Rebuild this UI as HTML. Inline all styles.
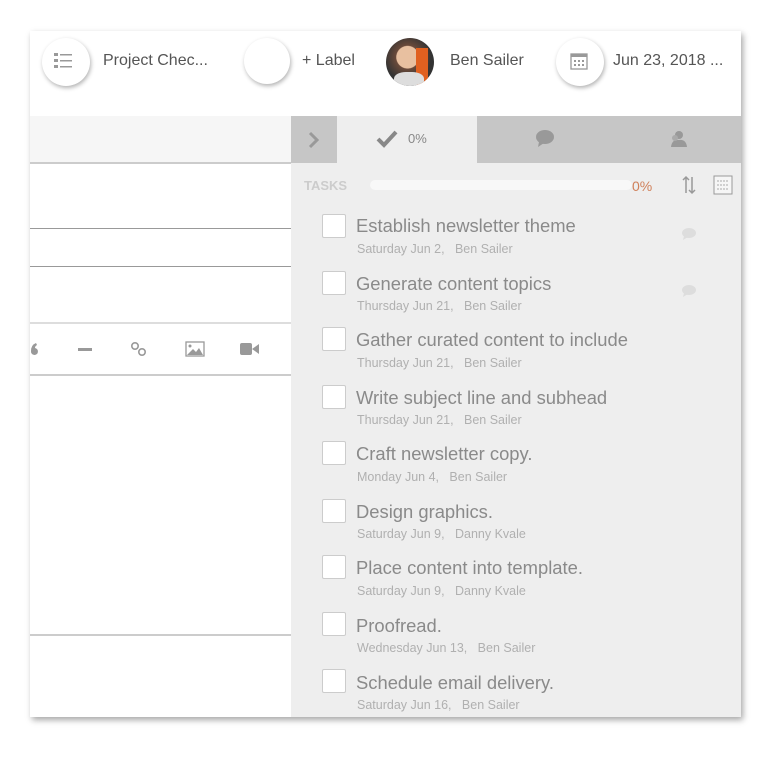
<!DOCTYPE html><html><head><style>
body{margin:0;width:770px;height:757px;background:#fff;font-family:"Liberation Sans",sans-serif;position:relative;overflow:hidden}
.a{position:absolute}
.win{left:30px;top:31px;width:711px;height:686px;background:#fff;box-shadow:2px 3px 6px rgba(0,0,0,.35)}
.circ{width:48px;height:48px;border-radius:50%;background:#fff;box-shadow:1px 2px 4px rgba(0,0,0,.3);}
.ht{font-size:16px;color:#555;top:52px}
.hl{left:0;width:261px;height:2px;background:#ccc}
.cb{left:322px;width:22px;height:22px;background:#fff;border:1px solid #ccc;border-radius:2px}
.t{left:356px;font-size:18.4px;color:#8a8a8a}
.s{left:357px;font-size:12.5px;color:#b0b0b0}
</style></head><body>
<div class="a win"></div>
<div class="a circ" style="left:42px;top:38px"></div>
<svg class="a" style="left:54px;top:52px" width="20" height="18"><g fill="#999"><rect x="0" y="1" width="4" height="3"/><rect x="6" y="2" width="12" height="1.5"/><rect x="0" y="7" width="4" height="3"/><rect x="6" y="8" width="12" height="1.5"/><rect x="0" y="13" width="4" height="3"/><rect x="6" y="14" width="12" height="1.5"/></g></svg>
<div class="a ht" style="left:103px">Project Chec...</div>
<div class="a circ" style="left:244px;top:38px;width:46px;height:46px"></div>
<div class="a ht" style="left:302px">+ Label</div>
<div class="a" style="left:386px;top:38px;width:48px;height:48px;border-radius:50%;background:radial-gradient(circle at 45% 40%,#e8c0a0 0 28%,#6a4a3a 30%,#333 60%);overflow:hidden"><div class="a" style="left:30px;top:10px;width:12px;height:38px;background:#e06020"></div><div class="a" style="left:8px;top:34px;width:30px;height:16px;background:#ddd;border-radius:40% 40% 0 0"></div></div>
<div class="a ht" style="left:450px">Ben Sailer</div>
<div class="a circ" style="left:556px;top:38px"></div>
<svg class="a" style="left:570px;top:52px" width="18" height="18"><rect x="1" y="2" width="16" height="15" fill="none" stroke="#999" stroke-width="1.3"/><rect x="1" y="2" width="16" height="3" fill="#999"/><g fill="#999"><rect x="4" y="8" width="2" height="2"/><rect x="8" y="8" width="2" height="2"/><rect x="12" y="8" width="2" height="2"/><rect x="4" y="12" width="2" height="2"/><rect x="8" y="12" width="2" height="2"/><rect x="12" y="12" width="2" height="2"/></g></svg>
<div class="a ht" style="left:613px">Jun 23, 2018 ...</div>
<div class="a" style="left:30px;top:116px;width:261px;height:47px;background:#f6f6f6"></div>
<div class="a hl" style="left:30px;top:162px"></div>
<div class="a hl" style="left:30px;top:228px;height:1px;background:#999"></div>
<div class="a hl" style="left:30px;top:266px;height:1px;background:#999"></div>
<div class="a hl" style="left:30px;top:322px;background:#ddd"></div>
<div class="a hl" style="left:30px;top:374px"></div>
<div class="a hl" style="left:30px;top:634px"></div>
<svg class="a" style="left:30px;top:342px" width="10" height="14"><path d="M6 1 Q1 3 1 9 A3.5 3.5 0 1 0 5 6 Q5 4 7 3Z" fill="#999"/></svg>
<div class="a" style="left:78px;top:348px;width:14px;height:3px;background:#999"></div>
<svg class="a" style="left:130px;top:341px" width="18" height="16"><circle cx="5" cy="5" r="3.2" fill="none" stroke="#999" stroke-width="1.6"/><circle cx="12" cy="11" r="3.2" fill="none" stroke="#999" stroke-width="1.6"/></svg>
<svg class="a" style="left:185px;top:341px" width="20" height="16"><rect x="1" y="1" width="18" height="14" fill="none" stroke="#999" stroke-width="1.3"/><circle cx="5" cy="5" r="1.5" fill="#999"/><path d="M2 14 L8 8 L11 11 L14 7 L18 14Z" fill="#999"/></svg>
<svg class="a" style="left:240px;top:342px" width="20" height="14"><rect x="0" y="1" width="12" height="12" rx="2" fill="#999"/><path d="M12 7 L19 2 L19 12Z" fill="#999"/></svg>
<div class="a" style="left:291px;top:116px;width:450px;height:601px;background:#eee"></div>
<div class="a" style="left:291px;top:116px;width:450px;height:47px;background:#c6c6c6"></div>
<div class="a" style="left:337px;top:116px;width:140px;height:47px;background:#eee"></div>
<svg class="a" style="left:308px;top:131px" width="12" height="18"><path d="M2 2 L9 9 L2 16" fill="none" stroke="#999" stroke-width="3"/></svg>
<svg class="a" style="left:376px;top:130px" width="22" height="18"><path d="M2 9 L8 15 L20 2" fill="none" stroke="#888" stroke-width="4"/></svg>
<div class="a" style="left:408px;top:131px;font-size:13px;color:#888">0%</div>
<svg class="a" style="left:535px;top:130px" width="20" height="18"><ellipse cx="10" cy="7" rx="9" ry="7" fill="#999"/><path d="M4 12 L3 17 L9 13Z" fill="#999"/></svg>
<svg class="a" style="left:668px;top:129px" width="22" height="20"><circle cx="11" cy="6" r="4" fill="#999"/><path d="M3 18 Q4 10 11 11 Q18 10 19 18Z" fill="#999"/><circle cx="7" cy="9" r="3" fill="#aaa"/></svg>
<div class="a" style="left:304px;top:178px;font-size:13px;font-weight:bold;color:#ccc">TASKS</div>
<div class="a" style="left:370px;top:180px;width:262px;height:10px;border-radius:5px;background:#f8f8f8"></div>
<div class="a" style="left:632px;top:178px;font-size:14px;color:#d0805a">0%</div>
<svg class="a" style="left:681px;top:175px" width="16" height="20"><path d="M5 2 V18 M2 5 L5 2 L8 5 M11 2 V18 M8 15 L11 18 L14 15" fill="none" stroke="#999" stroke-width="1.5"/></svg>
<svg class="a" style="left:713px;top:175px" width="20" height="20"><rect x="1" y="1" width="18" height="18" fill="#f6f6f6" stroke="#999"/><path d="M4 6 H16 M4 10 H16 M4 14 H16" stroke="#aaa" stroke-dasharray="2 1"/></svg>
<svg class="a" style="left:681px;top:227px" width="16" height="14"><ellipse cx="8" cy="6" rx="7" ry="5" fill="#ddd"/><path d="M3 9 L2 13 L7 10Z" fill="#ddd"/></svg>
<svg class="a" style="left:681px;top:284px" width="16" height="14"><ellipse cx="8" cy="6" rx="7" ry="5" fill="#ddd"/><path d="M3 9 L2 13 L7 10Z" fill="#ddd"/></svg>

<div class="a cb" style="top:214px"></div><div class="a t" style="top:215px">Establish newsletter theme</div><div class="a s" style="top:242px">Saturday Jun 2,&nbsp;&nbsp; Ben Sailer</div>
<div class="a cb" style="top:271px"></div><div class="a t" style="top:273px">Generate content topics</div><div class="a s" style="top:299px">Thursday Jun 21,&nbsp;&nbsp; Ben Sailer</div>
<div class="a cb" style="top:327px"></div><div class="a t" style="top:329px">Gather curated content to include</div><div class="a s" style="top:356px">Thursday Jun 21,&nbsp;&nbsp; Ben Sailer</div>
<div class="a cb" style="top:385px"></div><div class="a t" style="top:387px">Write subject line and subhead</div><div class="a s" style="top:413px">Thursday Jun 21,&nbsp;&nbsp; Ben Sailer</div>
<div class="a cb" style="top:441px"></div><div class="a t" style="top:443px">Craft newsletter copy.</div><div class="a s" style="top:470px">Monday Jun 4,&nbsp;&nbsp; Ben Sailer</div>
<div class="a cb" style="top:499px"></div><div class="a t" style="top:501px">Design graphics.</div><div class="a s" style="top:527px">Saturday Jun 9,&nbsp;&nbsp; Danny Kvale</div>
<div class="a cb" style="top:555px"></div><div class="a t" style="top:557px">Place content into template.</div><div class="a s" style="top:584px">Saturday Jun 9,&nbsp;&nbsp; Danny Kvale</div>
<div class="a cb" style="top:612px"></div><div class="a t" style="top:615px">Proofread.</div><div class="a s" style="top:641px">Wednesday Jun 13,&nbsp;&nbsp; Ben Sailer</div>
<div class="a cb" style="top:669px"></div><div class="a t" style="top:672px">Schedule email delivery.</div><div class="a s" style="top:698px">Saturday Jun 16,&nbsp;&nbsp; Ben Sailer</div>
</body></html>
